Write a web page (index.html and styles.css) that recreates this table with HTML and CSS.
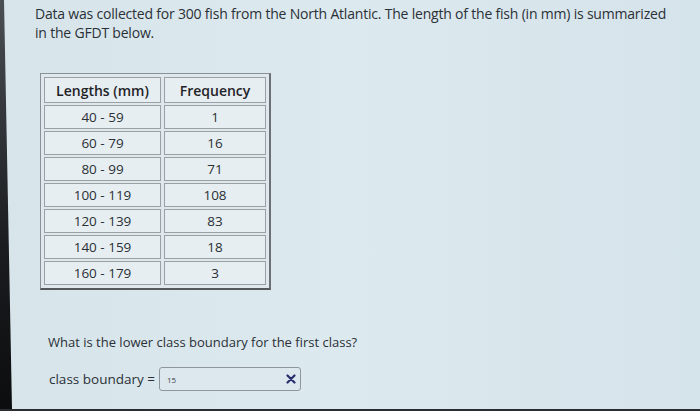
FILE: index.html
```html
<!DOCTYPE html>
<html>
<head>
<meta charset="utf-8">
<link rel="stylesheet" href="styles.css">
</head>
<body>
<div class="screen">
  <div class="bezel-left"></div>
  <div class="content">
    <p class="intro">Data was collected for 300 fish from the North Atlantic. The length of the fish (in mm) is summarized<br>in the GFDT below.</p>
    <table class="gfdt">
      <thead>
        <tr><th class="c1">Lengths (mm)</th><th class="c2">Frequency</th></tr>
      </thead>
      <tbody>
        <tr><td>40 - 59</td><td>1</td></tr>
        <tr><td>60 - 79</td><td>16</td></tr>
        <tr><td>80 - 99</td><td>71</td></tr>
        <tr><td>100 - 119</td><td>108</td></tr>
        <tr><td>120 - 139</td><td>83</td></tr>
        <tr><td>140 - 159</td><td>18</td></tr>
        <tr><td>160 - 179</td><td>3</td></tr>
      </tbody>
    </table>
    <p class="question">What is the lower class boundary for the first class?</p>
    <div class="answer">
      <span class="label">class boundary =</span>
      <div class="input">
        <span class="value">15</span>
        <svg class="wrong" width="10" height="10" viewBox="0 0 10 10"><path d="M1.5 1.5 L8.5 8.5 M8.5 1.5 L1.5 8.5" stroke="#2a2d6e" stroke-width="2.2" stroke-linecap="round"/></svg>
      </div>
    </div>
  </div>
</div>
<div class="bezel-bottom"></div>
</body>
</html>
```
FILE: styles.css
```css
html, body {
  margin: 0;
  padding: 0;
  width: 700px;
  height: 411px;
  overflow: hidden;
}
body {
  background: #141618;
  font-family: "Open Sans", "Liberation Sans", sans-serif;
  color: #2b3036;
  display: flex;
  flex-direction: column;
}
.screen {
  height: 409px;
  display: flex;
  background: linear-gradient(90deg, #d7e5eb 0%, #dce9ef 50%, #d5e3ea 100%);
}
.bezel-left {
  width: 12px;
  flex: none;
  background: linear-gradient(180deg, #4a4f55 0%, #1a1c1f 60%, #0c0d0e 100%);
  clip-path: polygon(0 0, 4px 0, 12px 100%, 0 100%);
  margin-right: -12px;
}
.content {
  flex: 1;
  padding: 4px 0 0 35px;
}
.intro {
  margin: 0;
  font-size: 14px;
  line-height: 19px;
  white-space: nowrap;
  letter-spacing: -0.2px;
}
.gfdt {
  margin: 31px 0 0 5px;
  border-collapse: separate;
  border-spacing: 3px 2px;
  border: 1px solid #8a9095;
  border-right-width: 2px;
  border-bottom-width: 2px;
  border-bottom-color: #55595e;
  border-right-color: #6c7175;
  background: #dfe8ec;
  padding: 1px 0;
}
.gfdt th, .gfdt td {
  border: 1px solid #9aa0a4;
  background: #e6eef1;
  text-align: center;
  font-size: 13.5px;
  height: 22px;
  padding: 0;
}
.gfdt th {
  font-weight: 600;
  font-size: 14px;
  height: 24px;
  color: #1f2327;
}
.gfdt .c1 { width: 115px; }
.gfdt .c2 { width: 100px; }
.question {
  margin: 43px 0 0 13px;
  font-size: 13px;
}
.answer {
  margin: 16px 0 0 14px;
  display: flex;
  align-items: center;
  font-size: 13.5px;
}
.label { margin-right: 4px; }
.input {
  width: 142px;
  height: 24px;
  border: 1px solid #8e969c;
  border-radius: 3px;
  display: flex;
  align-items: center;
  justify-content: space-between;
  padding: 0 4px 0 7px;
  box-sizing: border-box;
  background: #dce8ed;
}
.value { font-size: 8px; color: #3a3f45; }
.bezel-bottom {
  height: 2px;
  background: #2a2c2f;
}
```
